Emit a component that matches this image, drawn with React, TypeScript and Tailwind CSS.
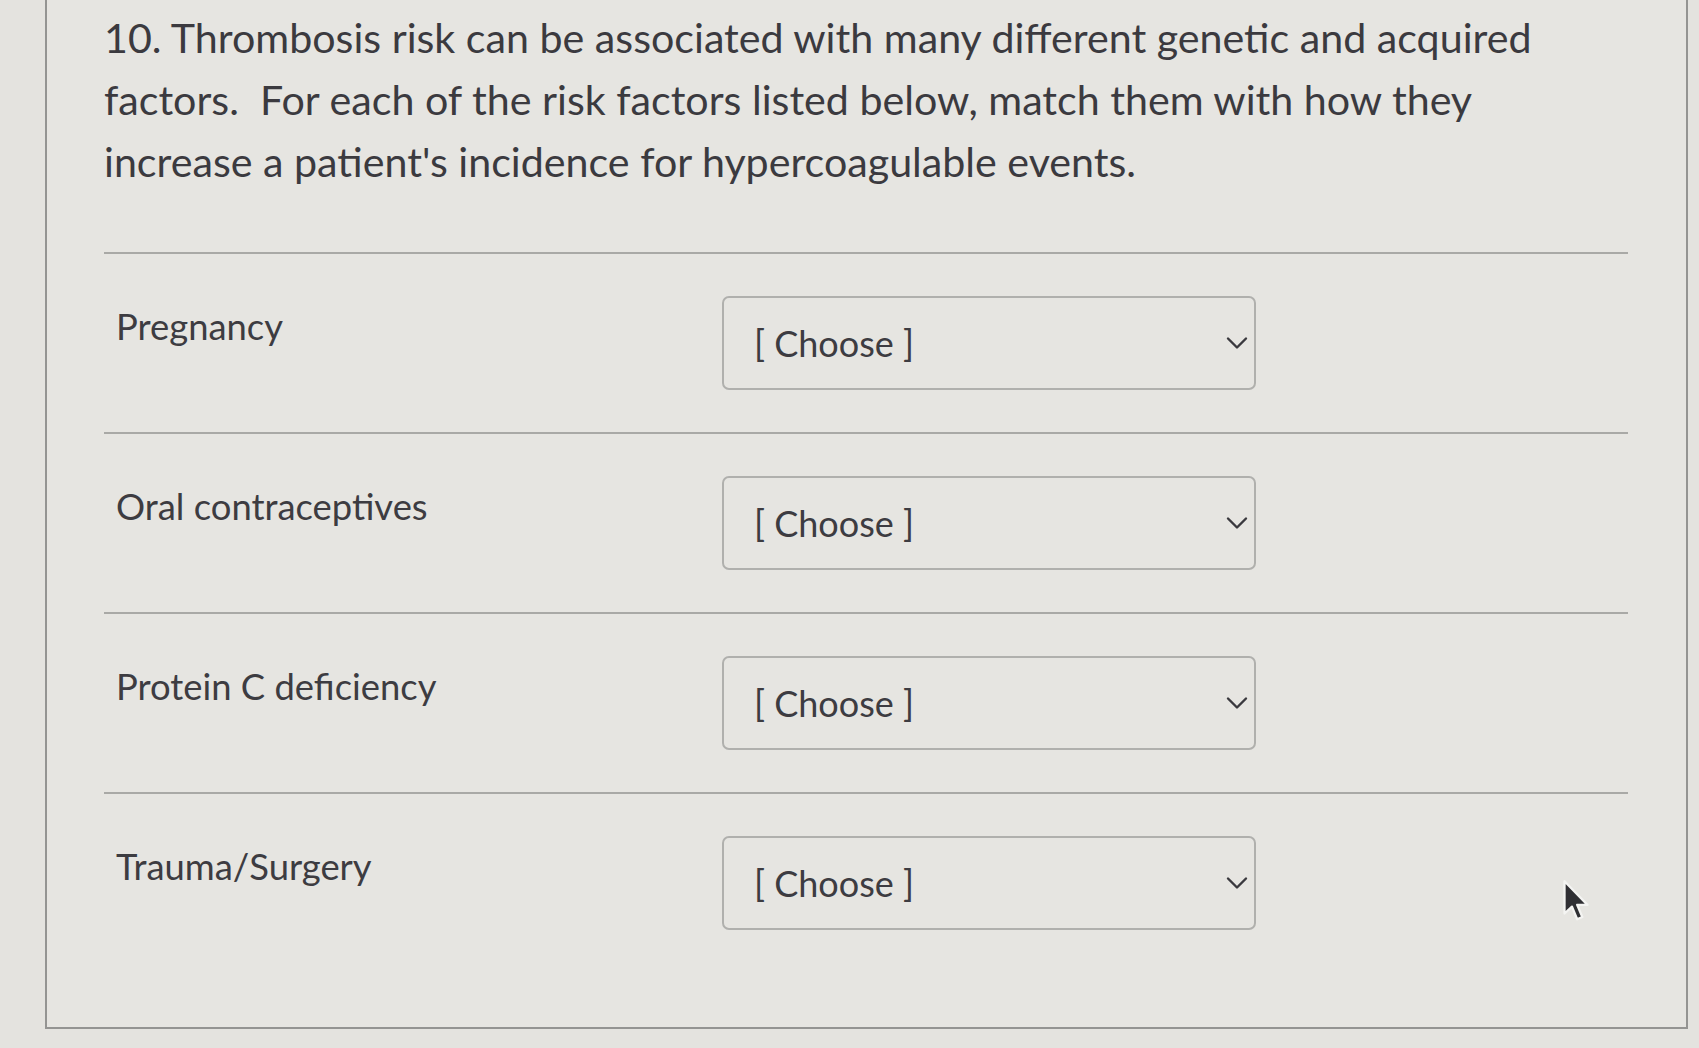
const rows = ["Pregnancy", "Oral contraceptives", "Protein C deficiency", "Trauma/Surgery"];

const Chevron = () => (
  <svg width="22" height="14" viewBox="0 0 22 14" fill="none">
    <path d="M2 2.5 L11 11.5 L20 2.5" stroke="#3a393e" strokeWidth="2.4" strokeLinecap="round" strokeLinejoin="round" />
  </svg>
);

const Cursor = () => (
  <svg width="30" height="46" viewBox="0 0 26 40" className="absolute left-[1561px] top-[879px]">
    <path d="M3 2 L3 30 L9.5 24 L14 35 L18.5 33 L14 22.5 L23 22.5 Z" fill="#2f2f33" stroke="#f4f4f2" strokeWidth="2" strokeLinejoin="round" />
  </svg>
);

const MatchRow = ({ label }: { label: string }) => {
  return (
    <div className="border-t-2 border-[#a9a9a6] flex pt-[42px] pb-[42px]">
      <div className="w-[618px] pl-3 pt-[6px] text-[36.4px] leading-[48px] text-[#3d3c41]">{label}</div>
      <div className="w-[534px] h-[94px] border-2 border-[#b0b0ad] rounded-[7px] flex items-center justify-between pl-[30px] pr-[6px]">
        <span className="text-[36px] text-[#3d3c41]">[ Choose ]</span>
        <Chevron />
      </div>
    </div>
  );
};

export default function App() {
  return (
    <div className="relative w-[1699px] h-[1048px] bg-[#e4e3df] overflow-hidden" style={{ fontFamily: "Lato, 'Open Sans', sans-serif" }}>
      <div className="ml-[45px] w-[1643px] h-[1029px] border-x-2 border-b-2 border-[#949492] bg-[#e6e5e1] pl-[57px] pr-[58px] pt-[6px]">
        <p className="text-[41.2px] leading-[62px] text-[#3b3a3f] mb-[60px] whitespace-nowrap">
          10. Thrombosis risk can be associated with many different genetic and acquired
          <br />
          factors.&nbsp; For each of the risk factors listed below, match them with how they
          <br />
          increase a patient's incidence for hypercoagulable events.
        </p>
        {rows.map((r) => (
          <MatchRow key={r} label={r} />
        ))}
      </div>
      <Cursor />
    </div>
  );
}
